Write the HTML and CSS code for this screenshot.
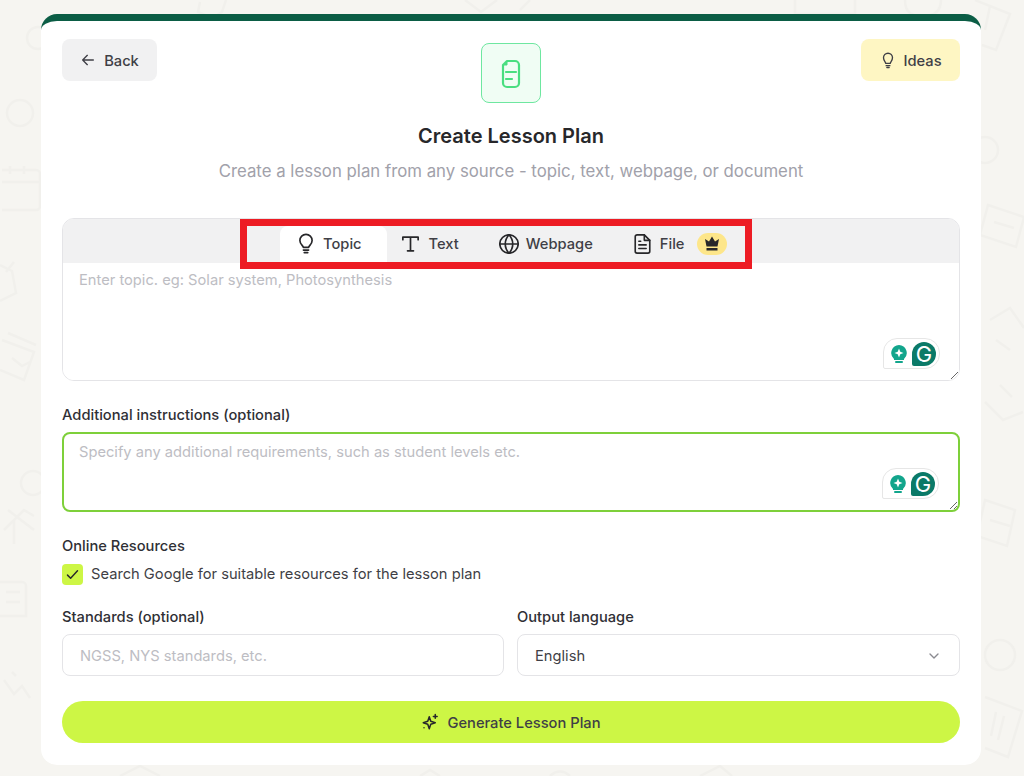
FILE: index.html
```html
<!DOCTYPE html>
<html lang="en">

<head>
    <meta charset="UTF-8">
    <meta name="viewport" content="width=device-width, initial-scale=1.0">
    <title>Create Lesson Plan</title>
    <link rel="stylesheet" href="styles.css">
</head>

<body>
    <!-- faint doodles behind the card -->
    <svg class="doodles" width="1024" height="776" viewBox="0 0 1024 776" fill="none" stroke="#f1f0ec" stroke-width="2.500">
        <circle cx="38" cy="38" r="11" />
        <circle cx="20" cy="113" r="13" />
        <circle cx="985" cy="150" r="13" />
        <circle cx="1000" cy="655" r="15" />
        <circle cx="33" cy="483" r="12" />
        <path d="M2 170h34a4 4 0 0 1 4 4v32a4 4 0 0 1-4 4H2M2 182h38M10 166v8M24 166v8" />
        <path d="M0 265l12 6 4 22-16 8M6 272l8-10" />
        <path d="M2 340l32 12-10 28-24-10M8 333l28 12M12 358l10 8 8-4" />
        <path d="M8 510l26 20M4 530l20-20 10 6M14 520v24" />
        <path d="M0 582h22a4 4 0 0 1 4 4v30H0M6 592h14M6 602h14" />
        <path d="M4 680l10 14 8-8 8 12M12 672l4 4" />
        <path d="M988 205l36 12-8 30-36-12zM994 222l20 6" />
        <path d="M990 320l20-12 14 20M996 340l14 10" />
        <path d="M985 500l30 10-8 36-30-10zM990 520l20 6" />
        <path d="M985 402l18 18 20-8M1000 385l12 12" />
        <path d="M985 697l37 14-14 46-23-9M996 712l-5 24M1004 716l-6 24" />
        <path d="M200 2l-2 10 14 6 10-6 4-12M465 0l16 12 16-12M530 0l-10 10M795 0v14h60V0" />
        <path d="M905 0c0 14 8 16 18 16s18-4 18-16" />
        <path d="M975 0l35 14-14 36-14-5M990 6l-5 24" />
        <path d="M420 776l10-6 10 6M120 776l20-10 20 10M700 776l20-10 12 10M550 776c6-6 14-6 20 0" />
    </svg>

    <main class="card">
        <div class="top">
            <button class="btn back">
                <svg width="16" height="16" viewBox="0 0 24 24" fill="none" stroke="#3f3f46" stroke-width="2" stroke-linecap="round" stroke-linejoin="round">
                    <path d="M20 12H4M11 5l-7 7 7 7" />
                </svg>
                <span>Back</span>
            </button>
            <div class="logo">
                <svg width="32" height="32" viewBox="0 0 32 32" fill="none" stroke="#4ade80" stroke-width="2.200" stroke-linecap="round" stroke-linejoin="round">
                    <path d="M12 4h8a4 4 0 0 1 4 4v18a4 4 0 0 1-4 4h-8a4 4 0 0 1-4-4V8z" />
                    <path d="M11 15h10M11 22h6" />
                    <path d="M9 8h3V5z" fill="#4ade80" stroke-width="1" />
                </svg>
            </div>
            <button class="btn ideas">
                <svg width="18" height="18" viewBox="0 0 24 24" fill="none" stroke="#3f3f46" stroke-width="1.800" stroke-linecap="round" stroke-linejoin="round">
                    <path d="M9 16.500c0-2-3-3.500-3-7.500a6 6 0 0 1 12 0c0 4-3 5.500-3 7.500z" />
                    <path d="M9.500 19.500h5M10.500 22h3" />
                </svg>
                <span>Ideas</span>
            </button>
        </div>

        <h1 class="title">Create Lesson Plan</h1>
        <p class="sub">Create a lesson plan from any source - topic, text, webpage, or document</p>

        <section class="panel">
            <div class="tabs">
                <div class="tab active">
                    <svg width="14" height="21" viewBox="4 0 16 24" fill="none" stroke="#27272a" stroke-width="1.900" stroke-linecap="round" stroke-linejoin="round">
                        <path d="M9 16.500c0-2-4-3.500-4-8a7 7 0 0 1 14 0c0 4.500-4 6-4 8z" />
                        <path d="M9 19.500h6M10 22.500h4" />
                    </svg>
                    Topic
                </div>
                <div class="tab">
                    <svg width="17" height="16" viewBox="2 3 20 18" fill="none" stroke="#27272a" stroke-width="2" stroke-linecap="round" stroke-linejoin="round">
                        <path d="M3 7V4h18v3M12 4v16M8.500 20h7" />
                    </svg>
                    Text
                </div>
                <div class="tab web">
                    <svg width="20" height="20" viewBox="2 2 20 20" fill="none" stroke="#27272a" stroke-width="1.700" stroke-linecap="round">
                        <circle cx="12" cy="12" r="9.200" />
                        <path d="M2.800 12h18.400M12 2.800c5 5.500 5 12.900 0 18.400M12 2.800c-5 5.500-5 12.900 0 18.400" />
                    </svg>
                    Webpage
                </div>
                <div class="tab file">
                    <svg width="17" height="20" viewBox="3 1 18 22" fill="none" stroke="#27272a" stroke-width="1.800" stroke-linecap="round" stroke-linejoin="round">
                        <path d="M14 2H6a2 2 0 0 0-2 2v16a2 2 0 0 0 2 2h12a2 2 0 0 0 2-2V8z" />
                        <path d="M14 2v6h6M8 13h8M8 17h8M8 9h2" />
                    </svg>
                    File
                    <span class="crown">
                        <svg width="18" height="15" viewBox="0 0 18 15" fill="#27272a">
                            <path d="M9 0.500l3 5 4-2.500-1.500 7.500h-11L2 3l4 2.500z" />
                            <rect x="3.500" y="12" width="11" height="2.500" />
                        </svg>
                    </span>
                </div>
            </div>
            <textarea class="field topic" placeholder="Enter topic. eg: Solar system, Photosynthesis"></textarea>
            <div class="gram">
                <svg width="18" height="20" viewBox="0 0 18 20">
                    <path d="M9 1a8 8 0 0 1 5 14v1H4v-1A8 8 0 0 1 9 1z" fill="#12a58c" />
                    <rect x="5" y="17" width="8" height="2" rx="1" fill="#12a58c" />
                    <path d="M9 4.500l1.300 3.200L13.500 9l-3.200 1.300L9 13.500l-1.300-3.200L4.500 9l3.200-1.300z" fill="#fff" />
                </svg>
                <span class="gram-g">G</span>
            </div>
        </section>

        <label class="lbl add">Additional instructions (optional)</label>
        <div class="extra">
            <textarea class="field more" placeholder="Specify any additional requirements, such as student levels etc."></textarea>
            <div class="gram">
                <svg width="18" height="20" viewBox="0 0 18 20">
                    <path d="M9 1a8 8 0 0 1 5 14v1H4v-1A8 8 0 0 1 9 1z" fill="#12a58c" />
                    <rect x="5" y="17" width="8" height="2" rx="1" fill="#12a58c" />
                    <path d="M9 4.500l1.300 3.200L13.500 9l-3.200 1.300L9 13.500l-1.300-3.200L4.500 9l3.200-1.300z" fill="#fff" />
                </svg>
                <span class="gram-g">G</span>
            </div>
        </div>

        <div class="lbl online">Online Resources</div>
        <div class="check-row">
            <span class="check">
                <svg width="15" height="15" viewBox="0 0 24 24" fill="none" stroke="#27272a" stroke-width="2.300" stroke-linecap="round" stroke-linejoin="round">
                    <path d="M4 13l5 5L20 6" />
                </svg>
            </span>
            <span class="check-text">Search Google for suitable resources for the lesson plan</span>
        </div>

        <div class="cols">
            <div>
                <label class="lbl">Standards (optional)</label>
                <input class="input" type="text" placeholder="NGSS, NYS standards, etc.">
            </div>
            <div>
                <label class="lbl">Output language</label>
                <div class="input select">
                    <span>English</span>
                    <svg width="16" height="16" viewBox="0 0 24 24" fill="none" stroke="#8a8a90" stroke-width="2" stroke-linecap="round" stroke-linejoin="round">
                        <path d="M6 9l6 6 6-6" />
                    </svg>
                </div>
            </div>
        </div>

        <button class="generate">
            <svg width="18" height="18" viewBox="0 0 24 24" fill="none" stroke="#27272a" stroke-width="2" stroke-linecap="round" stroke-linejoin="round">
                <path d="M11 5l2 6 6 2-6 2-2 6-2-6-6-2 6-2z" />
                <path d="M19 2v5M16.500 4.500h5M4 19.500h.01" />
            </svg>
            <span>Generate Lesson Plan</span>
        </button>
    </main>

    <!-- red highlight drawn over the tab bar -->
    <div class="mark"></div>
</body>

</html>
```

FILE: styles.css
```css
* {
    box-sizing: border-box;
}

body {
    margin: 0;
    height: 776px;
    overflow: hidden;
    background-color: #f6f5f1;
    font-family: Inter, "Liberation Sans", sans-serif;
    color: #27272a;
    position: relative;
}

.doodles {
    position: absolute;
    left: 0;
    top: 0;
}

.card {
    position: relative;
    width: 940px;
    height: 751px;
    margin: 14px 0 0 41px;
    padding: 18px 21px 0;
    background-color: #fff;
    border-top: 7px solid #0b5d45;
    border-radius: 16px;
}

.top {
    display: grid;
    grid-template-columns: 1fr 60px 1fr;
    align-items: start;
}

.btn {
    display: flex;
    align-items: center;
    justify-content: center;
    height: 42px;
    border: 0;
    border-radius: 8px;
    font-family: inherit;
    font-size: 14.7px;
    font-weight: 500;
    color: #3f3f46;
}

.btn span {
    padding-top: 2px;
}

.back {
    width: 95px;
    gap: 8px;
    background-color: #f1f1f2;
}

.ideas {
    justify-self: end;
    width: 99px;
    gap: 6px;
    background-color: #fef6c3;
}

.logo {
    display: flex;
    align-items: center;
    justify-content: center;
    width: 60px;
    height: 60px;
    margin-top: 4px;
    background-color: #f0fdf4;
    border: 1px solid #6ee7a0;
    border-radius: 8px;
}

.title {
    margin: 19px 0 0;
    font-size: 20px;
    line-height: 28px;
    font-weight: 600;
    text-align: center;
}

.sub {
    margin: 9px 0 0;
    font-size: 16.8px;
    line-height: 24px;
    color: #a1a1aa;
    text-align: center;
}

.panel {
    position: relative;
    margin-top: 35px;
    height: 163px;
    border: 1px solid #e4e4e7;
    border-radius: 12px;
    overflow: hidden;
}

.tabs {
    display: flex;
    align-items: flex-end;
    height: 44px;
    padding-left: 217px;
    background-color: #f1f1f2;
}

.tab {
    display: flex;
    align-items: center;
    gap: 10px;
    height: 37px;
    padding: 0 25px 2px 17px;
    font-size: 14.7px;
    font-weight: 500;
    color: #3f3f46;
    border-radius: 8px 8px 0 0;
}

.tab.active {
    margin-right: -2px;
    padding-left: 19px;
    background-color: #fff;
}

.tab.web {
    gap: 7px;
    margin-left: -2px;
}

.tab.file {
    gap: 9px;
    margin-left: -1px;
}

.crown {
    display: flex;
    align-items: center;
    justify-content: center;
    width: 30px;
    height: 22px;
    margin-left: 4px;
    background-color: #fde68a;
    border-radius: 11px;
}

.field {
    display: block;
    width: 100%;
    border: 0;
    outline: 0;
    background: #fff;
    font-family: inherit;
    font-size: 14.7px;
    line-height: 20px;
    padding: 7px 16px;
    color: #27272a;
}

.field::placeholder,
.input::placeholder {
    color: #bdbdc3;
}

.topic {
    height: 117px;
}

.gram {
    position: absolute;
    right: 19px;
    bottom: 11px;
    display: flex;
    align-items: center;
    gap: 4px;
    height: 31px;
    padding: 0 3px 0 6px;
    background-color: #fff;
    border: 1px solid #e6e6e6;
    border-radius: 14px 15px 15px 2px;
}

.gram-g {
    display: flex;
    align-items: center;
    justify-content: center;
    width: 24px;
    height: 24px;
    background-color: #0b7a68;
    border-radius: 12px 12px 12px 2px;
    font-size: 22px;
    font-weight: 400;
    color: #fff;
}

.lbl {
    display: block;
    font-size: 14.7px;
    line-height: 20px;
    font-weight: 500;
    color: #2f2f35;
}

.add {
    margin-top: 24px;
}

.extra {
    position: relative;
    margin-top: 7px;
}

.more {
    height: 80px;
    padding: 8px 15px;
    border: 2px solid #7ed03a;
    border-radius: 8px;
}

.extra .gram {
    right: 21px;
    bottom: 13px;
}

.online {
    margin-top: 24px;
}

.check-row {
    display: flex;
    align-items: center;
    gap: 8px;
    margin-top: 7px;
    font-size: 14.7px;
    line-height: 21px;
    color: #3f3f46;
}

.check-text {
    padding-top: 1px;
}

.check {
    display: flex;
    align-items: center;
    justify-content: center;
    width: 21px;
    height: 21px;
    background-color: #cdf645;
    border-radius: 4px;
}

.cols {
    display: grid;
    grid-template-columns: 442px 443px;
    gap: 13px;
    margin-top: 22px;
}

.input {
    display: block;
    width: 100%;
    height: 42px;
    margin-top: 7px;
    padding: 2px 17px 0;
    background-color: #fff;
    border: 1px solid #e4e4e7;
    border-radius: 8px;
    font-family: inherit;
    font-size: 14.7px;
}

.select {
    display: flex;
    align-items: center;
    justify-content: space-between;
    color: #3f3f46;
}

.generate {
    display: flex;
    align-items: center;
    justify-content: center;
    gap: 8px;
    width: 100%;
    height: 42px;
    margin-top: 25px;
    background-color: #cdf645;
    border: 0;
    border-radius: 21px;
    font-family: inherit;
    font-size: 14.7px;
    font-weight: 500;
    color: #3f3f46;
}

.generate span {
    padding-top: 2px;
}

.mark {
    position: absolute;
    left: 240px;
    top: 219px;
    width: 512px;
    height: 50px;
    border: 7px solid #ed1c24;
}
```
